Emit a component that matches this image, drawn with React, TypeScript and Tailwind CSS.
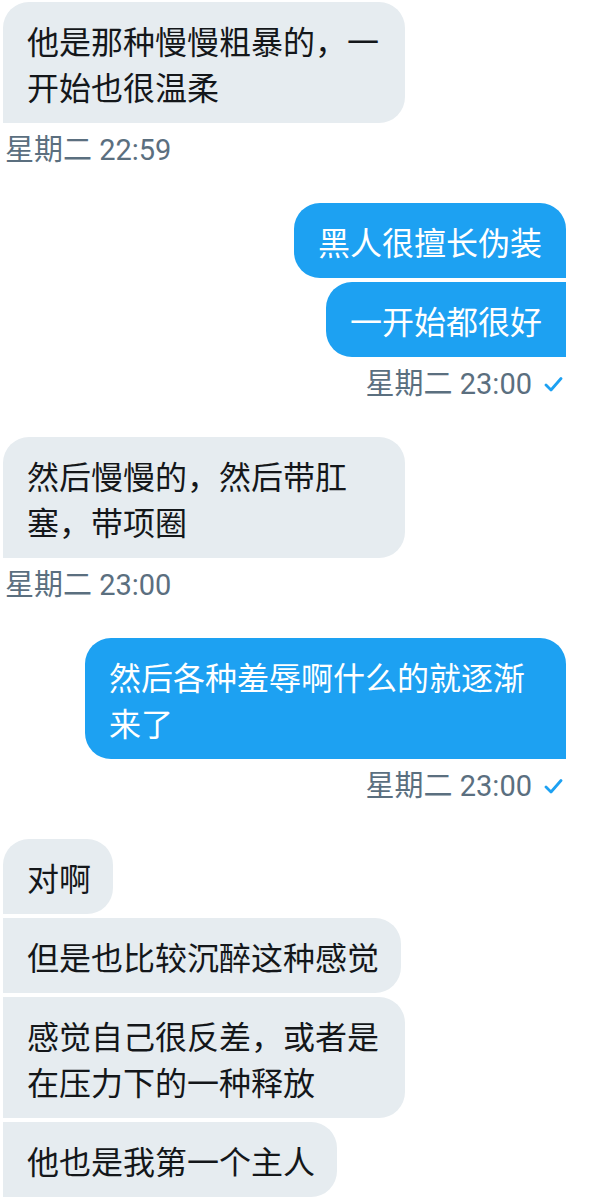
import React from "react";

type Msg = { text: string };

interface Group {
  side: "in" | "out";
  messages: Msg[];
  time: string;
}

const groups: Group[] = [
  { side: "in", messages: [{ text: "他是那种慢慢粗暴的，一开始也很温柔" }], time: "星期二 22:59" },
  {
    side: "out",
    messages: [{ text: "黑人很擅长伪装" }, { text: "一开始都很好" }],
    time: "星期二 23:00",
  },
  { side: "in", messages: [{ text: "然后慢慢的，然后带肛塞，带项圈" }], time: "星期二 23:00" },
  { side: "out", messages: [{ text: "然后各种羞辱啊什么的就逐渐来了" }], time: "星期二 23:00" },
  {
    side: "in",
    messages: [
      { text: "对啊" },
      { text: "但是也比较沉醉这种感觉" },
      { text: "感觉自己很反差，或者是在压力下的一种释放" },
      { text: "他也是我第一个主人" },
    ],
    time: "",
  },
];

const font = { fontFamily: '"Noto Sans CJK SC", "Noto Sans", sans-serif' };
const timeFont = { fontFamily: 'Roboto, "Noto Sans CJK SC", sans-serif' };

const Check = () => (
  <svg width="19" height="15" viewBox="0 0 19 15" className="ml-[12px]">
    <polyline points="2,8 7,13 17,1.5" fill="none" stroke="#1da1f2" strokeWidth="2.8" strokeLinecap="round" strokeLinejoin="round" />
  </svg>
);

const Bubble = ({ side, text, first }: { side: "in" | "out"; text: string; first: boolean }) => {
  if (side === "in") {
    return (
      <div
        className={`max-w-[402px] self-start bg-[#e6ecf0] text-[#14171a] text-[32px] leading-[46px] pl-[24px] pr-[22px] pt-[15px] pb-[14px] rounded-r-[26px] ${first ? "rounded-tl-[26px]" : ""}`}
      >
        {text}
      </div>
    );
  }
  return (
    <div
      className={`max-w-[481px] self-end bg-[#1da1f2] text-white text-[32px] leading-[46px] px-[24px] pt-[15px] pb-[14px] rounded-l-[26px] ${first ? "rounded-tr-[26px]" : ""}`}
    >
      {text}
    </div>
  );
};

export default function App() {
  return (
    <div className="w-[589px] h-[1200px] overflow-hidden bg-white" style={font}>
      <div className="flex flex-col pt-[2px] pl-[3px] pr-[23px]">
        {groups.map((g, gi) => (
          <div key={gi} className="flex flex-col">
            <div className="flex flex-col gap-[4px]">
              {g.messages.map((m, i) => (
                <Bubble key={i} side={g.side} text={m.text} first={i === 0} />
              ))}
            </div>
            {g.time && (
              <div
                className={`flex items-center mt-[10px] mb-[36px] text-[29px] leading-[34px] text-[#5b6f7f] ${g.side === "out" ? "self-end pr-[3px]" : "self-start pl-[2px]"}`}
                style={timeFont}
              >
                <span>{g.time}</span>
                {g.side === "out" && <Check />}
              </div>
            )}
          </div>
        ))}
      </div>
    </div>
  );
}
